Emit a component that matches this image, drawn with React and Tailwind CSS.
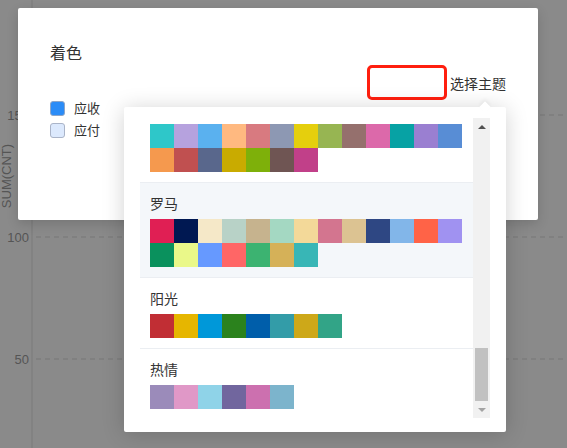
import React from "react";

const themes = [
  {
    name: "马卡龙",
    colors: [
      "#2ec7c9", "#b6a2de", "#5ab1ef", "#ffb980", "#d87a80", "#8d98b3", "#e5cf0d",
      "#97b552", "#95706d", "#dc69aa", "#07a2a4", "#9a7fd1", "#588dd5", "#f5994e",
      "#c05050", "#59678c", "#c9ab00", "#7eb00a", "#6f5553", "#c14089",
    ],
  },
  {
    name: "罗马",
    hover: true,
    colors: [
      "#e01f54", "#001852", "#f5e8c8", "#b8d2c7", "#c6b38e", "#a4d8c2", "#f3d999",
      "#d3758f", "#dcc392", "#2e4783", "#82b6e9", "#ff6347", "#a092f1", "#0a915d",
      "#eaf889", "#6699ff", "#ff6666", "#3cb371", "#d5b158", "#38b6b6",
    ],
  },
  {
    name: "阳光",
    colors: ["#c12e34", "#e6b600", "#0098d9", "#2b821d", "#005eaa", "#339ca8", "#cda819", "#32a487"],
  },
  {
    name: "热情",
    colors: ["#9b8bba", "#e098c7", "#8fd3e8", "#71669e", "#cc70af", "#7cb4cc"],
  },
];

// chart behind the mask
const ChartBg = () => (
  <svg className="absolute inset-0" width="567" height="448">
    <rect width="567" height="448" fill="#8a8a8a" />
    {[115, 237, 359].map((y) => (
      <line key={y} x1="36" x2="567" y1={y} y2={y} stroke="#777" strokeDasharray="5 4" />
    ))}
    <line x1="32" x2="32" y1="0" y2="448" stroke="#7a7a7a" />
    <g fill="#555" fontSize="13" fontFamily="Liberation Sans, sans-serif" textAnchor="end">
      <text x="29" y="120">150</text>
      <text x="29" y="242">100</text>
      <text x="29" y="364">50</text>
    </g>
    <text
      x="0"
      y="0"
      fill="#555"
      fontSize="13"
      fontFamily="Liberation Sans, sans-serif"
      textAnchor="middle"
      transform="translate(11 176) rotate(-90)"
    >
      SUM(CNT)
    </text>
  </svg>
);

const Section = ({ theme, first }) => (
  <div
    className={`px-[10px] pb-[10px] ${first ? "pt-[11px]" : "pt-[10px] border-t border-[#ebeef2]"} ${
      theme.hover ? "bg-[#f4f7fa]" : ""
    }`}
  >
    <div className="text-[14px] leading-[20px] text-[#333]">{theme.name}</div>
    <div className="mt-[6px] flex flex-wrap w-[312px]">
      {theme.colors.map((c, i) => (
        <div key={i} className="w-[24px] h-[24px]" style={{ backgroundColor: c }} />
      ))}
    </div>
  </div>
);

export default function App() {
  return (
    <div
      className="relative w-[567px] h-[448px] overflow-hidden"
      style={{ fontFamily: '"Noto Sans CJK SC", "Noto Sans", sans-serif' }}
    >
      <ChartBg />

      {/* modal */}
      <div className="absolute left-[18px] top-[8px] w-[520px] h-[212px] bg-white rounded-[2px] shadow-[0_4px_12px_rgba(0,0,0,0.15)] px-[32px] pt-[32px]">
        <div className="text-[16px] leading-[24px] text-[#333]">着色</div>
        <div className="mt-[1px] flex items-center justify-end">
          <div className="w-[80px] h-[35px] border-[3px] border-[#ff1f0f] rounded-[5px]" />
          <span className="ml-[3px] text-[14px] leading-[20px] text-[#333]">选择主题</span>
        </div>
        <div className="-mt-[3px] flex flex-col">
          <div className="h-[22px] flex items-center">
            <span className="w-[15px] h-[15px] rounded-[3px] bg-[#2b8cf7] border border-[#8ea6c8]" />
            <span className="ml-[9px] text-[13px] text-[#333]">应收</span>
          </div>
          <div className="h-[22px] flex items-center">
            <span className="w-[15px] h-[15px] rounded-[3px] bg-[#dce9fd] border border-[#aab4c8]" />
            <span className="ml-[9px] text-[13px] text-[#333]">应付</span>
          </div>
        </div>
      </div>

      {/* theme dropdown */}
      <div className="absolute left-[124px] top-[107px] w-[382px] h-[325px] bg-white rounded-[2px] shadow-[0_2px_22px_rgba(0,0,0,0.18)] pl-[16px] pr-[16px] pt-[11px]">
        <div className="absolute -top-[4px] right-[17px] w-[8px] h-[8px] bg-white rotate-45 shadow-[-2px_-2px_4px_rgba(0,0,0,0.05)]" />
        <div className="flex h-[300px]">
          <div className="flex-1 overflow-hidden">
            <div className="-mt-[31px]">
              {themes.map((t, i) => (
                <Section key={t.name} theme={t} first={i === 0} />
              ))}
            </div>
          </div>
          {/* scrollbar */}
          <div className="w-[17px] bg-[#f1f1f1] flex flex-col items-center">
            <div className="h-[17px] flex items-center justify-center">
              <span className="w-0 h-0 border-l-[4px] border-r-[4px] border-b-[4px] border-l-transparent border-r-transparent border-b-[#505050]" />
            </div>
            <div className="flex-1 w-full flex flex-col justify-end px-[2px]">
              <div className="h-[53px] bg-[#c1c1c1]" />
            </div>
            <div className="h-[17px] flex items-center justify-center">
              <span className="w-0 h-0 border-l-[4px] border-r-[4px] border-t-[4px] border-l-transparent border-r-transparent border-t-[#a3a3a3]" />
            </div>
          </div>
        </div>
      </div>
    </div>
  );
}
